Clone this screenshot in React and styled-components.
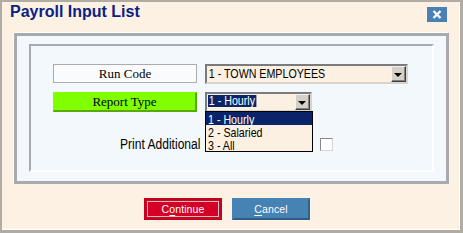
import styled, { createGlobalStyle } from "styled-components";

const Global = createGlobalStyle`
  html, body { margin: 0; padding: 0; background: #fff; }
  * { box-sizing: border-box; }
`;

const SANS = `"Liberation Sans", Arial, sans-serif`;

const Window = styled.div`
  width: 463px;
  height: 233px;
  background: #fcf1e3;
  border-style: solid;
  border-width: 2px 3px 3px 2px;
  border-color: #b0aca4;
  box-shadow: inset -1px -1px 0 #fff;
  display: flex;
  flex-direction: column;
  font-family: ${SANS};
`;

const TitleBar = styled.div`
  height: 30px;
  display: flex;
  align-items: flex-start;
  justify-content: space-between;
  padding: 1px 13px 0 8px;
`;

const Title = styled.div`
  font-size: 16px;
  line-height: 18px;
  font-weight: bold;
  color: #0a2184;
`;

const CloseButton = styled.div`
  width: 20px;
  height: 15px;
  margin-top: 4px;
  background: #4a80b6;
  display: flex;
  align-items: center;
  justify-content: center;
`;

const Panel = styled.div`
  margin: 1px 11px 0 12px;
  height: 151px;
  background: #f3f8fc;
  border: 3px solid #a9a9b0;
  box-shadow: -1px -1px 0 #fff;
  padding: 8px 12px 9px 12px;
  display: flex;
`;

const GroupBox = styled.div`
  flex: 1;
  border: 2px solid;
  border-color: #a9a9b0 #fff #fff #a9a9b0;
  padding: 18px 0 0 22px;
  display: flex;
  flex-direction: column;
`;

const Row = styled.div`
  display: grid;
  grid-template-columns: 144px auto;
  column-gap: 8px;
  align-items: ${(p) => (p.$center ? "center" : "start")};
  margin-top: ${(p) => p.$top || 0}px;
`;

const LabelBox = styled.div`
  height: ${(p) => (p.$green ? 20 : 19)}px;
  background: ${(p) => (p.$green ? "#80ff00" : "#f9fbfd")};
  border-style: solid;
  border-color: ${(p) => (p.$green ? "#80ff00 #5aa800 #5aa800 #80ff00" : "#ababab")};
  border-width: ${(p) => (p.$green ? "1px 2px 2px 1px" : "1px")};
  font-family: "Liberation Serif", "Times New Roman", serif;
  font-size: 13px;
  line-height: 17px;
  text-align: center;
  color: #000;
`;

const Select = styled.div`
  position: relative;
  width: ${(p) => p.$w}px;
  height: 20px;
  border: 2px solid;
  border-color: #7b7b7b #d8d4cc #d8d4cc #7b7b7b;
  background: #fcf0e2;
  display: flex;
  align-items: center;
  padding-left: 1px;
`;

const Narrow = styled.span`
  display: inline-block;
  white-space: nowrap;
  font-family: ${SANS};
  font-size: ${(p) => p.$size || 13}px;
  transform: scaleX(${(p) => p.$scale || 0.82});
  transform-origin: ${(p) => (p.$right ? "right" : "left")} center;
`;

const Value = styled(Narrow)`
  line-height: 12px;
  height: 12px;
  padding: 0 2px 0 1px;
  color: ${(p) => (p.$sel ? "#fff" : "#000")};
  background: ${(p) => (p.$sel ? "#0a246a" : "transparent")};
  margin-top: ${(p) => (p.$sel ? -2 : 0)}px;
`;

const ArrowButton = styled.div`
  position: absolute;
  right: 0;
  top: 0;
  width: 15px;
  height: 16px;
  background: #d4d0c8;
  border: 1px solid;
  border-color: #f4f4f4 #404040 #404040 #f4f4f4;
  box-shadow: inset -1px -1px 0 #808080;
  display: flex;
  align-items: center;
  justify-content: center;
  &::after {
    content: "";
    width: 0;
    height: 0;
    border-left: 4px solid transparent;
    border-right: 4px solid transparent;
    border-top: 4px solid #000;
    margin: 1px 1px 0 0;
  }
`;

const List = styled.div`
  position: absolute;
  top: calc(100% + 1px);
  left: -2px;
  width: 108px;
  border: 1px solid #000;
  background: #fcf0e2;
  z-index: 2;
`;

const Item = styled.div`
  height: 13px;
  line-height: 13px;
  padding-left: 2px;
  color: ${(p) => (p.$active ? "#fff" : "#000")};
  background: ${(p) => (p.$active ? "#0a246a" : "transparent")};
`;

const PlainLabel = styled.div`
  line-height: 13px;
  text-align: right;
  margin-right: -3px;
  color: #000;
`;

const Checkbox = styled.div`
  width: 13px;
  height: 13px;
  margin-left: 115px;
  background: #fff;
  border: 1px solid;
  border-color: #888 #d4d4d4 #d4d4d4 #888;
`;

const Footer = styled.div`
  display: flex;
  justify-content: center;
  gap: 10px;
  padding: 14px 8px 0 0;
`;

const Button = styled.div`
  width: 78px;
  height: 22px;
  display: flex;
  align-items: center;
  justify-content: center;
  font-size: 10.5px;
  color: #fff;
  background: ${(p) => (p.$primary ? "#d50025" : "#4682b4")};
  border: 2px solid;
  border-color: ${(p) =>
    p.$primary ? "#c8001f" : "#4682b4 #33648c #2f5c82 #4682b4"};
  outline: ${(p) => (p.$primary ? "1px solid #c4c4c4" : "none")};
  outline-offset: -4px;
  letter-spacing: 0.1px;
  u { text-decoration: underline; text-underline-offset: 2px; }
`;

export default function App() {
  return (
    <>
      <Global />
      <Window>
        <TitleBar>
          <Title>Payroll Input List</Title>
          <CloseButton>
            <svg width="10" height="9" viewBox="0 0 10 9">
              <path d="M1.5 1 L8.5 8 M8.5 1 L1.5 8" stroke="#fff" strokeWidth="2.2" />
            </svg>
          </CloseButton>
        </TitleBar>
        <Panel>
          <GroupBox>
            <Row>
              <LabelBox>Run Code</LabelBox>
              <Select $w={203}>
                <Value>1 - TOWN EMPLOYEES</Value>
                <ArrowButton />
              </Select>
            </Row>
            <Row $top={8}>
              <LabelBox $green>Report Type</LabelBox>
              <Select $w={107}>
                <Value $sel>1 - Hourly</Value>
                <ArrowButton />
                <List>
                  <Item $active><Narrow>1 - Hourly</Narrow></Item>
                  <Item><Narrow>2 - Salaried</Narrow></Item>
                  <Item><Narrow>3 - All</Narrow></Item>
                </List>
              </Select>
            </Row>
            <Row $top={25} $center>
              <PlainLabel>
                <Narrow $size={14} $scale={0.86} $right>Print Additional</Narrow>
              </PlainLabel>
              <Checkbox />
            </Row>
          </GroupBox>
        </Panel>
        <Footer>
          <Button $primary>
            C<u>o</u>ntinue
          </Button>
          <Button>
            <u>C</u>ancel
          </Button>
        </Footer>
      </Window>
    </>
  );
}
